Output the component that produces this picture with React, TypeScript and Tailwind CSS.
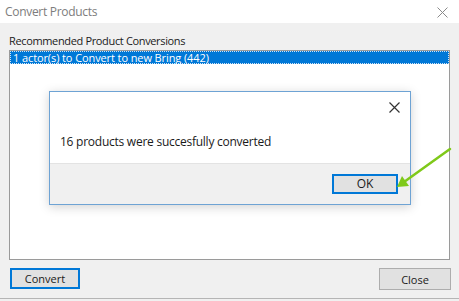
export default function App() {
  return (
    <div className="relative w-[459px] h-[301px] overflow-hidden bg-[#f0f0f0] font-['Open_Sans','Noto_Sans',sans-serif] text-[#1a1a1a]">
      {/* title bar */}
      <div className="h-[23px] bg-white flex items-center justify-between pl-[5px] pr-[11px]">
        <span className="text-[12px] text-[#7d7d7d] leading-none tracking-[-0.3px]">Convert Products</span>
        <svg width="11" height="11" viewBox="0 0 11 11" className="mt-[1px]">
          <path d="M0.5 0.5 L10.5 10.5 M10.5 0.5 L0.5 10.5" stroke="#8a8a8a" strokeWidth="1" />
        </svg>
      </div>

      {/* body */}
      <div className="pl-[9px] pr-[9px] pt-[11px] border-b border-[#b5b5b5] h-[276px]">
        <p className="text-[11px] leading-[13px] tracking-[-0.35px]">Recommended Product Conversions</p>
        <div className="mt-[3px] h-[210px] bg-white border border-[#9a9a9a]">
          <div className="h-[13px] bg-[#0078d7] border border-dotted border-[#cfe3f5] text-white text-[11px] leading-[11px] pl-[2px] tracking-[-0.1px]">
            1 actor(s) to Convert to new Bring (442)
          </div>
        </div>
        <div className="mt-[8px] flex justify-between items-start">
          <button className="ml-[1px] w-[70px] h-[21px] bg-[#e1e1e1] border-2 border-[#0078d7] text-[11px] leading-none">
            Convert
          </button>
          <button className="-mr-[1px] w-[72px] h-[22px] bg-[#e1e1e1] border border-[#adadad] text-[11px] leading-none">
            Close
          </button>
        </div>
      </div>

      {/* message box */}
      <div className="absolute left-[49px] top-[91px] w-[362px] h-[114px] border border-[#6ea3d4] bg-[#f0f0f0] shadow-[0_2px_10px_rgba(0,0,0,0.18)] flex flex-col">
        <div className="h-[72px] bg-white relative border-b border-[#e3e3e3]">
          <svg width="11" height="11" viewBox="0 0 11 11" className="absolute right-[10px] top-[10px]">
            <path d="M0.5 0.5 L10.5 10.5 M10.5 0.5 L0.5 10.5" stroke="#333" strokeWidth="1.2" />
          </svg>
          <p className="absolute left-[10px] top-[43px] text-[12px] leading-[14px] tracking-[-0.25px]">
            16 products were succesfully converted
          </p>
        </div>
        <div className="flex justify-end pr-[12px] pt-[10px]">
          <button className="w-[66px] h-[20px] bg-[#e1e1e1] border-2 border-[#0078d7] text-[12px] leading-none">
            OK
          </button>
        </div>
      </div>

      {/* annotation arrow */}
      <svg className="absolute left-0 top-0" width="459" height="301" viewBox="0 0 459 301">
        <path d="M450 149 L404 182" stroke="#7fc91a" strokeWidth="2.5" strokeLinecap="round" />
        <path d="M397 187 L402 176 L409 186 Z" fill="#7fc91a" />
      </svg>
    </div>
  );
}
